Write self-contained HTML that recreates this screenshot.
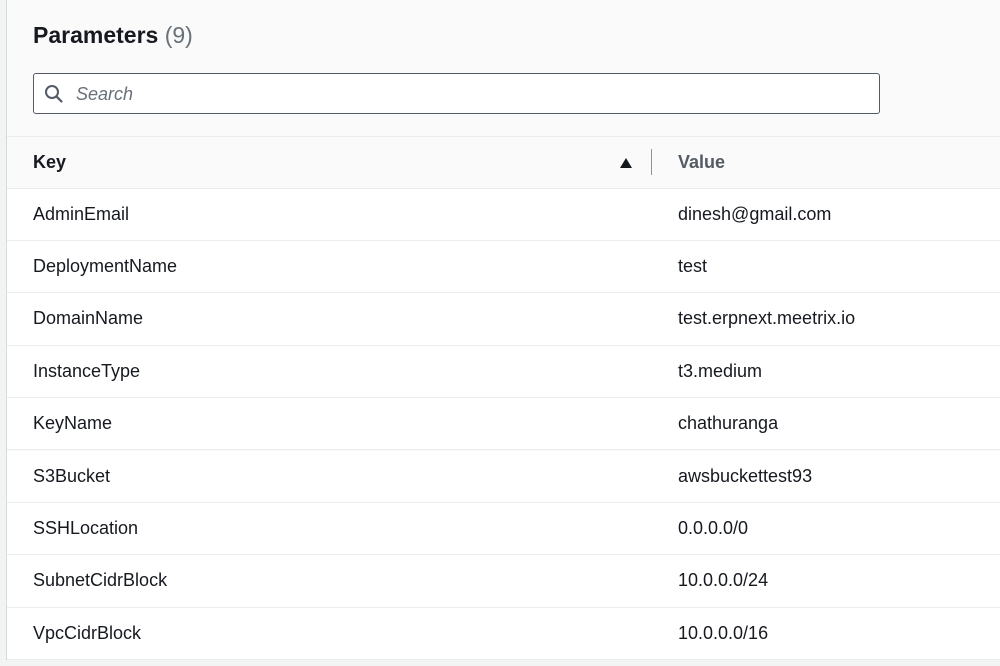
<!DOCTYPE html><html><head><style>
body{margin:0;background:#f2f3f3;font-family:"Liberation Sans",sans-serif;width:1000px;height:666px;overflow:hidden;position:relative}
.panel{position:absolute;left:6px;top:0;width:1000px;height:658px;background:#fafafa;border-left:1px solid #d5dbdb;border-bottom:2px solid #c6cccc}
h1{position:absolute;left:26px;top:22px;margin:0;font-size:23px;font-weight:bold;color:#16191f}
h1 span{font-weight:normal;color:#687078}
.search{position:absolute;left:26px;top:73px;width:845px;height:39px;border:1px solid #545b64;border-radius:3px;background:#fff}
.search svg{position:absolute;left:10px;top:10px}
.search i{position:absolute;left:42px;top:10px;font-size:18px;color:#687078}
.hdr{position:absolute;left:0;top:136px;width:1000px;height:51px;border-top:1px solid #eaeded;border-bottom:1px solid #eaeded}
.row{position:absolute;left:0;width:1000px;height:51.4px;background:#fff;border-bottom:1px solid #eaeded}
.k{position:absolute;left:26px;font-size:18px;color:#16191f}
.v{position:absolute;left:671px;font-size:18px;color:#16191f}
</style></head><body><div class="panel">
<h1>Parameters <span>(9)</span></h1>
<div class="search"><svg width="20" height="20" viewBox="0 0 20 20"><circle cx="8" cy="8" r="6" fill="none" stroke="#545b64" stroke-width="2"/><line x1="12.3" y1="12.3" x2="17.5" y2="17.5" stroke="#545b64" stroke-width="2.2" stroke-linecap="round"/></svg><i>Search</i></div>
<div class="hdr"><b class="k" style="top:15px">Key</b>
<svg style="position:absolute;left:612px;top:20px" width="14" height="12"><polygon points="7,1 13,11 1,11" fill="#16191f"/></svg>
<div style="position:absolute;left:644px;top:12px;width:1px;height:26px;background:#879596"></div>
<b class="v" style="top:15px;color:#545b64">Value</b></div>
<div id="rows"></div>
</div>
<script>
var d=[["AdminEmail","dinesh@gmail.com"],["DeploymentName","test"],["DomainName","test.erpnext.meetrix.io"],["InstanceType","t3.medium"],["KeyName","chathuranga"],["S3Bucket","awsbuckettest93"],["SSHLocation","0.0.0.0/0"],["SubnetCidrBlock","10.0.0.0/24"],["VpcCidrBlock","10.0.0.0/16"]];
var h="";d.forEach(function(r,i){var t=188.5+i*52.4;h+='<div class="row" style="top:'+t+'px"><span class="k" style="top:15px">'+r[0]+'</span><span class="v" style="top:15px">'+r[1]+'</span></div>';});
document.getElementById("rows").innerHTML=h;
</script></body></html>
